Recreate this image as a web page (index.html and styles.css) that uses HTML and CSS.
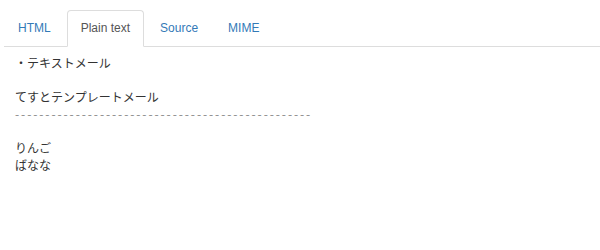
FILE: index.html
```html
<!DOCTYPE html>
<html lang="ja">
<head>
    <meta charset="UTF-8">
    <title>Mail preview</title>
    <link rel="stylesheet" href="styles.css">
</head>
<body>
    <ul class="nav-tabs">
        <li><a href="#">HTML</a></li>
        <li class="active"><a href="#">Plain text</a></li>
        <li><a href="#">Source</a></li>
        <li><a href="#">MIME</a></li>
    </ul>

    <div class="tab-content">
        <div class="mail-text">・テキストメール

てすとテンプレートメール
<span class="rule">-------------------------------------------------</span>

りんご
ばなな</div>
    </div>
</body>
</html>
```

FILE: styles.css
```css
body { margin: 0; padding: 10px 0 10px 4px; font-family: "Liberation Sans", Arial, "Noto Sans CJK JP", sans-serif; font-size: 12px; color: #333; background: #fff; }
.nav-tabs { display: flex; list-style: none; margin: 0; padding: 0; border-bottom: 1px solid #ddd; }
.nav-tabs li { margin-right: 2px; margin-bottom: -1px; }
.nav-tabs a { display: block; padding: 9px 13px; line-height: 17px; color: #337ab7; text-decoration: none; border: 1px solid transparent; border-radius: 4px 4px 0 0; }
.nav-tabs .active a { color: #555; background: #fff; border-color: #ddd; border-bottom-color: transparent; }
.tab-content { padding: 7px 11px; }
.mail-text { white-space: pre-line; line-height: 17px; font-family: "Noto Sans CJK JP", sans-serif; font-size: 12px; color: #333; }
.rule { letter-spacing: 1.9px; color: #888; }
```
